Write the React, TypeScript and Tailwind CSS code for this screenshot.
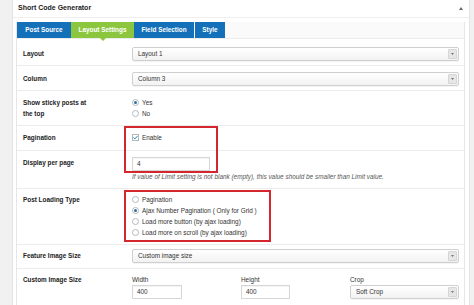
import React from "react";

const font = { fontFamily: '"Liberation Sans", Arial, Helvetica, sans-serif' };

function Select({ value, className = "" }: { value: string; className?: string }) {
  return (
    <div
      className={`flex h-[14px] items-center justify-between rounded-[2px] border border-[#cfcfcf] bg-linear-to-b from-white to-[#f2f2f2] pl-[5px] pr-px text-[6.4px] text-[#333] shadow-[0_1px_0_rgba(0,0,0,0.04)] ${className}`}
    >
      <span>{value}</span>
      <span className="flex h-[10px] w-[9px] items-center justify-center rounded-[1px] border border-[#d6d6d6] bg-[#e6e6e6]">
        <svg width="3" height="2" viewBox="0 0 3 2">
          <path d="M0 0h3L1.5 2z" fill="#777" />
        </svg>
      </span>
    </div>
  );
}

function Radio({ checked, label }: { checked?: boolean; label: string }) {
  return (
    <div className="flex h-[11px] items-center gap-[3px] text-[6.4px] text-[#333]">
      <span className="flex size-[7px] items-center justify-center rounded-full border border-[#b4b9be] bg-white">
        {checked && <span className="size-[3px] rounded-full bg-[#2a6fa8]" />}
      </span>
      <span>{label}</span>
    </div>
  );
}

function Row({
  label,
  children,
  className = "",
}: {
  label: React.ReactNode;
  children: React.ReactNode;
  className?: string;
}) {
  return (
    <div className={`flex border-t border-[#ececec] ${className}`}>
      <div className="w-[115px] shrink-0 pl-[6px] text-[6.4px] font-bold leading-[11px] text-[#222]">
        {label}
      </div>
      <div className="flex-1 pr-[5px]">{children}</div>
    </div>
  );
}

function TextInput({ value, className = "" }: { value: string; className?: string }) {
  return (
    <div
      className={`flex h-[14px] items-center border border-[#d6d6d6] bg-white pl-[4px] text-[6.4px] text-[#333] shadow-[inset_0_1px_1px_rgba(0,0,0,0.05)] ${className}`}
    >
      {value}
    </div>
  );
}

export default function App() {
  return (
    <div className="relative flex h-[305px] w-[474px] overflow-hidden bg-[#f1f1f1]" style={font}>
      <div className="ml-[12px] h-full w-[458px] border-x border-[#e3e3e3] bg-white">
        {/* header */}
        <div className="flex h-[18px] items-center justify-between border-b border-[#eeeeee] pl-[5px] pr-[6px]">
          <span className="text-[7px] font-bold text-[#222]">Short Code Generator</span>
          <svg width="4" height="3" viewBox="0 0 4 3">
            <path d="M0 3h4L2 0z" fill="#666" />
          </svg>
        </div>

        <div className="ml-[3px] mt-[4px] w-[449px] border-x border-[#e6e6e6] bg-white">
          {/* tabs */}
          <div className="relative flex h-[16px] bg-[#fafafa] text-[6.4px] font-bold text-white">
            <div className="flex w-[54px] items-center justify-center bg-[#1470b8]">Post Source</div>
            <div className="relative flex w-[63px] items-center justify-center bg-[#8cc63f]">
              Layout Settings
              <span className="absolute left-1/2 top-full -ml-[3px] h-0 w-0 border-x-[3px] border-t-[3px] border-x-transparent border-t-[#8cc63f]" />
            </div>
            <div className="flex w-[60px] items-center justify-center bg-[#1470b8]">Field Selection</div>
            <div className="ml-px flex w-[30px] items-center justify-center bg-[#1470b8]">Style</div>
          </div>

          <Row label={<span className="leading-[14px]">Layout</span>} className="h-[27px] pt-[8px]">
            <Select value="Layout 1" />
          </Row>
          <Row label={<span className="leading-[14px]">Column</span>} className="h-[25px] pt-[6px]">
            <Select value="Column 3" />
          </Row>
          <Row
            label={
              <>
                Show sticky posts at
                <br />
                the top
              </>
            }
            className="h-[35px] pt-[6px]"
          >
            <Radio checked label="Yes" />
            <Radio label="No" />
          </Row>
          <Row label="Pagination" className="h-[25px] pt-[6px]">
            <div className="flex h-[11px] items-center gap-[3px] text-[6.4px] text-[#333]">
              <span className="flex size-[7px] items-center justify-center border border-[#b4b9be] bg-white">
                <svg width="6" height="5" viewBox="0 0 6 5">
                  <path d="M0.6 2.5 2.3 4.2 5.5 0.6" fill="none" stroke="#1e8cbe" strokeWidth="1.2" />
                </svg>
              </span>
              <span>Enable</span>
            </div>
          </Row>
          <Row label="Display per page" className="h-[38px] pt-[6px]">
            <TextInput value="4" className="w-[78px]" />
            <p className="text-[6.4px] italic leading-[11px] text-[#555]">
              If value of Limit setting is not blank (empty), this value should be smaller than Limit value.
            </p>
          </Row>
          <Row label="Post Loading Type" className="h-[56px] pt-[5px]">
            <Radio label="Pagination" />
            <Radio checked label="Ajax Number Pagination ( Only for Grid )" />
            <Radio label="Load more button (by ajax loading)" />
            <Radio label="Load more on scroll (by ajax loading)" />
          </Row>
          <Row label={<span className="leading-[14px]">Feature Image Size</span>} className="h-[24px] pt-[4px]">
            <Select value="Custom image size" />
          </Row>
          <Row label="Custom Image Size" className="h-[40px] pt-[5px]">
            <div className="grid grid-cols-3 text-[6.4px] text-[#333]">
              <div>
                <div className="leading-[11px]">Width</div>
                <TextInput value="400" className="h-[13px] w-[50px]" />
              </div>
              <div>
                <div className="leading-[11px]">Height</div>
                <TextInput value="400" className="h-[13px] w-[49px]" />
              </div>
              <div>
                <div className="leading-[11px]">Crop</div>
                <Select value="Soft Crop" />
              </div>
            </div>
          </Row>
        </div>
      </div>

      {/* annotation boxes */}
      <div className="absolute left-[124px] top-[126px] h-[47px] w-[94px] border-2 border-[#d3272d]" />
      <div className="absolute left-[124px] top-[190px] h-[52px] w-[147px] border-2 border-[#d3272d]" />
    </div>
  );
}
